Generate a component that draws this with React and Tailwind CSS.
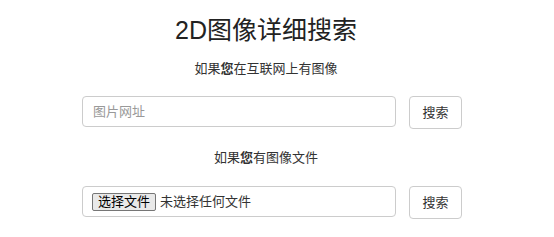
export default function App() {
  const font = { fontFamily: '"Liberation Sans", "Noto Sans CJK SC", sans-serif' };
  return (
    <div className="w-[554px] h-[237px] bg-white text-[#333] overflow-hidden" style={font}>
      <div className="w-[532px] text-center">
        <h1 className="pt-[12px] text-[25px] leading-[36px] text-[#222]">2D图像详细搜索</h1>
        <p className="mt-[11px] text-[13px] leading-[20px]">
          如果<b className="font-bold">您</b>在互联网上有图像
        </p>
      </div>
      <div className="mt-[17px] ml-[82px] flex items-start gap-[13px]">
        <input
          className="w-[314px] h-[31px] border border-[#ccc] rounded-[4px] px-[10px] text-[13px] placeholder:text-[#999] outline-none"
          placeholder="图片网址"
          style={font}
        />
        <button className="w-[53px] h-[33px] border border-[#ccc] rounded-[4px] bg-white text-[13px] text-[#333]">
          搜索
        </button>
      </div>
      <div className="w-[532px] text-center mt-[19px]">
        <p className="text-[13px] leading-[20px]">
          如果<b className="font-bold">您</b>有图像文件
        </p>
      </div>
      <div className="mt-[18px] ml-[82px] flex items-start gap-[13px]">
        <div className="w-[314px] h-[31px] border border-[#ccc] rounded-[4px] pl-[9px] flex items-center gap-[4px] text-[13px]">
          <span className="h-[18px] w-[64px] flex items-center justify-center bg-[#e9e9e9] border border-[#767676] rounded-[2px] text-[13px] text-black leading-none">
            选择文件
          </span>
          <span className="text-[#333]">未选择任何文件</span>
        </div>
        <button className="w-[53px] h-[33px] border border-[#ccc] rounded-[4px] bg-white text-[13px] text-[#333]">
          搜索
        </button>
      </div>
    </div>
  );
}
